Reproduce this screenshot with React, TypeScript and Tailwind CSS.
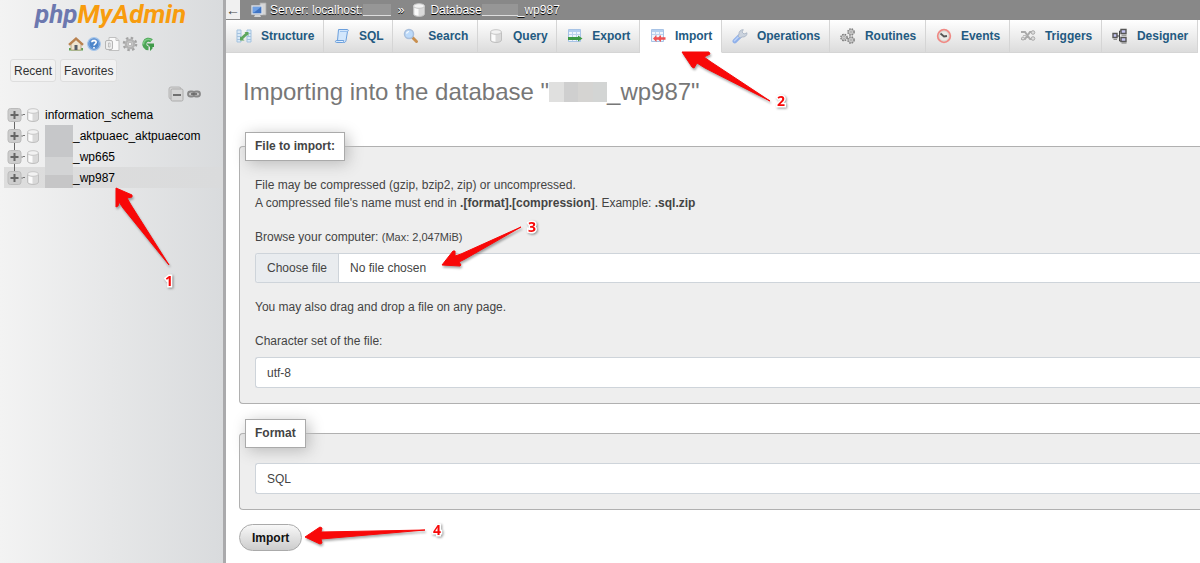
import type { ReactNode } from "react";

const tabs = [
  { label: "Structure", icon: <StructureIcon /> },
  { label: "SQL", icon: <SqlIcon /> },
  { label: "Search", icon: <SearchIcon /> },
  { label: "Query", icon: <DatabaseIcon /> },
  { label: "Export", icon: <TransferIcon color="#3d9a46" /> },
  { label: "Import", icon: <TransferIcon color="#f05050" flip />, active: true },
  { label: "Operations", icon: <WrenchIcon /> },
  { label: "Routines", icon: <RoutinesIcon /> },
  { label: "Events", icon: <ClockIcon /> },
  { label: "Triggers", icon: <TriggersIcon /> },
  { label: "Designer", icon: <DesignerIcon /> },
];

const databases = [
  { name: "information_schema" },
  { name: "_aktpuaec_aktpuaecom", mask: "bg-[#c6c7c9]" },
  { name: "_wp665", mask: "bg-linear-to-b from-[#c6c7c9] from-50% to-[#d3d4d5] to-50%" },
  { name: "_wp987", mask: "bg-linear-to-b from-[#d3d4d5] from-40% to-[#c6c6c7] to-40%", selected: true },
];

function Icon({ children }: { children: ReactNode }) {
  return (
    <svg viewBox="0 0 16 16" className="size-4 shrink-0" fill="none" aria-hidden="true">
      {children}
    </svg>
  );
}

function DatabaseIcon() {
  return (
    <Icon>
      <path d="M2.500 4v8c0 1.400 2.400 2.500 5.500 2.500s5.500-1.100 5.500-2.500V4" fill="#d9d9d9" stroke="#c0c0c0" />
      <path d="M3.500 5.500v7c1 .7 2.500 1.200 4 1.200V6.800z" fill="#fbfbfb" />
      <ellipse cx="8" cy="4" rx="5.500" ry="2.300" fill="#f2f2f2" stroke="#c8c8c8" />
    </Icon>
  );
}

function StructureIcon() {
  return (
    <Icon>
      <path d="M1 2h4v12H1zM11 2h4v12h-4z" fill="#d9e9f7" stroke="#a3c2df" />
      <path d="M1 5.500h4M1 8.500h4M11 5.500h4M11 8.500h4M1 11.500h4M11 11.500h4" stroke="#a3c2df" />
      <path d="M5 11 11 5.500" stroke="#5da65d" strokeWidth="2.800" />
      <path d="M4 8.500v4H8.500M12.500 8V4H8.500z" fill="#5da65d" />
    </Icon>
  );
}

function SqlIcon() {
  return (
    <Icon>
      <path d="M4.500 1.500h9c1 0 1 2 0 2L12 12.500c-.3 1.400-1 2-2 2H2.500c-1.500 0-1.300-2 0-2h1z" fill="#d3e7fc" stroke="#6b9fdc" />
      <path d="M2.500 12.500h7.300c-.6 1 .1 2 .2 2" stroke="#6b9fdc" fill="#eaf4ff" />
      <path d="M13.500 3.500H6" stroke="#9cc2ee" />
    </Icon>
  );
}

function SearchIcon() {
  return (
    <Icon>
      <path d="m9.500 9.500 4 4" stroke="#c98f4e" strokeWidth="3" strokeLinecap="round" />
      <circle cx="6" cy="6" r="4.500" fill="#bcdafa" stroke="#a9bfdc" strokeWidth="1.500" />
      <path d="M3.500 5.500A2.800 2.800 0 0 1 6 3.500" stroke="#fff" strokeWidth="1.200" />
    </Icon>
  );
}

function TransferIcon({ color, flip }: { color: string; flip?: boolean }) {
  return (
    <Icon>
      <path d="M1.500 1.500h12v12h-12z" fill="#eef5fd" stroke="#a7c3e6" />
      <path d="M2 2h11v2H2z" fill="#b4d0f0" />
      <path d="M2 6.500h11M5.500 4v9M9.500 4v9" stroke="#bcd2ec" />
      {flip ? (
        <path d="m3 10.500 3.500-3.500v2.300h2L11 7v2.300h4.500v2.400H11V14l-2.500-2.300h-2V14z" fill={color} />
      ) : (
        <path d="M1 9h10V7.500l4.500 3-4.500 3V12H1z" fill={color} />
      )}
    </Icon>
  );
}

function WrenchIcon() {
  return (
    <Icon>
      <path d="m2.800 13.200 5-5" stroke="#8fb0ea" strokeWidth="4.500" strokeLinecap="round" />
      <path d="m2.500 12.700 4.500-4.500" stroke="#bcd2f8" strokeWidth="1.500" strokeLinecap="round" />
      <path d="M7 6.500c-.5-2.500 1.500-5 4.300-4.800L10 4l2 2 3-1.200c.3 2.700-2.200 4.700-5 4.200L8 10 6 8z" fill="#cbd3de" stroke="#a6b1c2" strokeWidth=".8" />
    </Icon>
  );
}

function Gear({ x, y, r }: { x: number; y: number; r: number }) {
  return (
    <>
      <circle cx={x} cy={y} r={r} stroke="#777" strokeWidth="1.600" strokeDasharray="1.500 .9" />
      <circle cx={x} cy={y} r={r - 0.5} fill="#ddd" stroke="#888" strokeWidth=".6" />
      <circle cx={x} cy={y} r={r / 3} fill="#fff" stroke="#777" strokeWidth=".6" />
    </>
  );
}

function RoutinesIcon() {
  return (
    <Icon>
      <Gear x={11} y={4} r={3} />
      <Gear x={4} y={9.5} r={3} />
      <Gear x={11} y={12} r={3} />
    </Icon>
  );
}

function ClockIcon() {
  return (
    <Icon>
      <circle cx="8" cy="8" r="6.300" fill="#eceae6" stroke="#f08a85" strokeWidth="1.800" />
      <circle cx="8" cy="8" r="5" stroke="#c9c5bf" strokeWidth=".6" />
      <path d="m4.500 5.500 3.500 3 3-.5" stroke="#555" strokeWidth="1.800" />
    </Icon>
  );
}

function TriggersIcon() {
  return (
    <Icon>
      <path d="M1 4h4l5 7h3M1 11h4l5-7h3" stroke="#aaa" strokeWidth="2" />
      <path d="M3 7.500h4" stroke="#bbb" />
      <circle cx="13" cy="4.500" r="1.800" fill="#ddd" stroke="#aaa" />
      <circle cx="13" cy="10.500" r="1.800" fill="#ddd" stroke="#aaa" />
      <circle cx="3" cy="10.500" r="1.500" fill="#ddd" stroke="#aaa" />
    </Icon>
  );
}

function DesignerIcon() {
  return (
    <Icon>
      <path d="M5 8h2.500M9 3H7.500v10H9" stroke="#444" />
      <path d="M1 5.500h4v4H1zM9 1.500h5v4H9zM9 9.500h5v4H9z" fill="#c4c4f2" stroke="#555" strokeWidth="1.400" />
      <path d="M9.500 7.200h5M1.500 11.300h3.500M9.500 15h5" stroke="#777" />
    </Icon>
  );
}

function ServerIcon() {
  return (
    <Icon>
      <path d="M9 1h6v12H9z" fill="#d5d5d5" stroke="#aaa" strokeWidth=".8" />
      <path d="M1 4h10v8H1z" fill="#3f74c4" stroke="#d8dde6" strokeWidth="1.400" />
      <path d="M2 5h8L3 10.500H2z" fill="#6fa0e4" />
      <path d="M4 13h5l1 2H3z" fill="#d5d5d5" />
    </Icon>
  );
}

function HomeIcon() {
  return (
    <Icon>
      <path d="M1 12h14v2.500H1z" fill="#5da052" />
      <path d="M3 7.500 8 3l5 4.500V14H3z" fill="#efe4d0" stroke="#b59a72" strokeWidth=".8" />
      <path d="M1 8.800 8 2.500l7 6.300" stroke="#b98250" strokeWidth="2.400" />
      <path d="M6.500 9h3v5h-3z" fill="#555c68" />
    </Icon>
  );
}

function HelpIcon() {
  return (
    <Icon>
      <circle cx="8" cy="8" r="6.300" fill="#4c85ca" stroke="#a7c6ea" strokeWidth="1.200" />
      <circle cx="8" cy="8" r="4.800" stroke="#7faadf" strokeWidth=".8" />
      <path d="M5.800 6.300C6 4 10.200 4 10.200 6.300 10.200 7.800 8 7.800 8 9.500M8 11v1.500" stroke="#fff" strokeWidth="1.600" />
    </Icon>
  );
}

function DocsIcon() {
  return (
    <Icon>
      <path d="M5 1.500h7l3 3v10H5z" fill="#fafafa" stroke="#c0c0c0" />
      <path d="M12 1.500v3h3" stroke="#c0c0c0" />
      <rect x="1.500" y="4.500" width="7" height="9" rx="1.500" fill="#ededed" stroke="#b5b5b5" />
      <path d="M4.500 7v4H6V7z" fill="#fff" stroke="#aaa" strokeWidth=".7" />
    </Icon>
  );
}

function SettingsIcon() {
  return (
    <Icon>
      <circle cx="8" cy="8" r="6" stroke="#a3a3a3" strokeWidth="2.600" strokeDasharray="2.400 2.310" />
      <circle cx="8" cy="8" r="4" fill="#ddd" stroke="#b3b3b3" strokeWidth="2.600" />
      <circle cx="8" cy="8" r="1.900" fill="#f3f3f3" stroke="#999" strokeWidth=".8" />
    </Icon>
  );
}

function ReloadIcon() {
  return (
    <Icon>
      <path d="M11.500 4.800A4.300 4.300 0 1 0 8.500 12.300" stroke="#4ba455" strokeWidth="4" />
      <path d="M11.500 4.500A4.800 4.800 0 0 0 3.500 8.500" stroke="#7acb82" strokeWidth="1.400" />
      <path d="M6.500 7.500H14V11h-1.500v1.500L10 15V11z" fill="#3f9a49" />
    </Icon>
  );
}

function ExpandIcon() {
  return (
    <Icon>
      <path d="M14 8h2" stroke="#777" />
      <rect x="1" y="1.500" width="13" height="13" rx="2.500" fill="#cdcdcd" stroke="#bbb" />
      <path d="M3.500 8h8M7.500 4v8" stroke="#666" strokeWidth="2" />
    </Icon>
  );
}

function CollapseIcon() {
  return (
    <Icon>
      <rect x="1" y="1" width="12" height="12" rx="2" fill="#d3d3d3" stroke="#b5b5b5" />
      <rect x="3" y="3" width="12" height="12" rx="1.500" fill="#d6d6d6" stroke="#acacac" />
      <path d="M5 9h8" stroke="#666" strokeWidth="1.800" />
    </Icon>
  );
}

function LinkIcon() {
  return (
    <Icon>
      <rect x="2" y="5.500" width="6.500" height="5" rx="2.500" fill="#c5c5c5" stroke="#888" strokeWidth="1.800" />
      <rect x="7.500" y="5.500" width="6.500" height="5" rx="2.500" fill="#c5c5c5" stroke="#888" strokeWidth="1.800" />
      <path d="M5 8h6" stroke="#666" strokeWidth="1.600" />
    </Icon>
  );
}

function Sidebar() {
  return (
    <aside className="w-[226px] shrink-0 border-r-[3px] border-[#aaaaac] bg-linear-to-r from-[#f3f3f3] to-[#d9dbdd] text-black">
      <a href="#home" aria-label="phpMyAdmin" className="block h-8">
        <svg viewBox="0 0 223 32" className="h-8 w-full">
          <text x="35" y="23" className="font-['Roboto',sans-serif] text-[26px] font-bold italic">
            <tspan fill="#6c78af">php</tspan>
            <tspan fill="#f89c0e">MyAdmin</tspan>
          </text>
        </svg>
      </a>

      <nav aria-label="Shortcuts" className="mt-1 flex justify-center gap-[2px]">
        <a href="#home" aria-label="Home"><HomeIcon /></a>
        <a href="#help" aria-label="Help"><HelpIcon /></a>
        <a href="#docs" aria-label="Documentation"><DocsIcon /></a>
        <a href="#settings" aria-label="Settings"><SettingsIcon /></a>
        <a href="#reload" aria-label="Reload"><ReloadIcon /></a>
      </nav>

      <div className="mt-[7px] flex gap-1 pl-[10px]">
        <button className="h-[23px] rounded-[3px] border border-[#dedede] bg-[#f2f2f2] px-[3px] text-[#333]">Recent</button>
        <button className="h-[23px] rounded-[3px] border border-[#dedede] bg-[#f2f2f2] px-[3px] text-[#333]">Favorites</button>
      </div>

      <div className="mt-1 flex justify-end gap-[2px] pr-[21px]">
        <button aria-label="Collapse all"><CollapseIcon /></button>
        <button aria-label="Unlink from main panel"><LinkIcon /></button>
      </div>

      <div className="relative mt-[2px]">
        <div className="absolute top-4 left-[14px] h-[62px] w-px bg-[#666]" />
        <ul>
          {databases.map((db) => (
            <li
              key={db.name}
              className={`ml-1 flex h-[21px] items-center pl-[3px] ${db.selected ? "bg-linear-to-r from-[#dddddd] to-[#dadbdc]" : ""}`}
            >
              <button aria-label={`Expand ${db.name}`} className="relative">
                <ExpandIcon />
              </button>
              <span className="h-px w-[2px] bg-[#777]" />
              <DatabaseIcon />
              <a href={`#${db.name}`} className="ml-1 flex items-center">
                {db.mask && <span className={`h-[21px] w-7 ${db.mask}`} />}
                {db.name}
              </a>
            </li>
          ))}
        </ul>
      </div>
    </aside>
  );
}

function Panel({ title, children }: { title: string; children: ReactNode }) {
  return (
    <fieldset className="rounded-l-[4px] border border-r-0 border-[#b0b0b0] bg-[#eee] pb-[15px] pl-[15px]">
      <legend className="-ml-[10px] border border-[#aaa] bg-white px-[9px] py-[5px] leading-[17px] font-bold shadow-[3px_3px_15px_#bbb]">
        {title}
      </legend>
      {children}
    </fieldset>
  );
}

const field = "w-full rounded-l-[3px] border border-r-0 border-[#ced4da] bg-white";

// Numbered walkthrough arrows drawn over the page
function Callouts() {
  return (
    <svg width="1200" height="563" className="pointer-events-none absolute top-0 left-0" aria-hidden="true">
      <g fill="#f80808" stroke="#f80808" strokeLinejoin="round" className="drop-shadow-[1px_2px_1px_#00000055]">
        <path d="M116 188 132 195v2l-5 1 4 7 38 60-46-57-4-6-1 4-2 1z" />
        <path d="m682 52 27 0 1 2-6 3 7 5 59 39-65-33-8-5-3 5-2-1z" />
        <path d="m442 265 11-14 2 0 0 5 6-2 60-27-56 32-6 3 2 3-1 1z" />
        <path d="m305 537 15-10 2 1-1 4 104-2-104 9 1 4-2 1z" />
      </g>
      <g
        fill="#f80808"
        stroke="#fff"
        strokeWidth="3"
        paintOrder="stroke"
        className="font-['Open_Sans',sans-serif] text-[14px] font-bold drop-shadow-[1px_1px_1px_#00000066]"
      >
        <text x="165" y="286">1</text>
        <text x="777" y="106">2</text>
        <text x="528" y="232">3</text>
        <text x="433" y="535">4</text>
      </g>
    </svg>
  );
}

export default function App() {
  return (
    <div className="relative flex min-h-screen overflow-hidden bg-white font-['Liberation_Sans',Arial,sans-serif] text-[12px] leading-[18px] text-[#444]">
      <Sidebar />

      <div className="min-w-0 flex-1">
        <header className="flex h-5 items-center bg-[#888] text-white [text-shadow:0_1px_0_#000]">
          <button
            aria-label="Hide panel"
            className="h-[19px] w-[14px] self-start bg-[#f0f0f0] text-[14px] text-[#444] [text-shadow:none]"
          >
            ←
          </button>
          <a href="#server" className="ml-[11px] flex items-center gap-[3px]">
            <ServerIcon />
            <span className="flex items-center">
              Server: localhost:
              <span className="h-3 w-7 border-b border-[#ddd] bg-[#969696]" />
            </span>
          </a>
          <span className="mx-[7px]">»</span>
          <a href="#database" className="flex items-center gap-[3px]">
            <DatabaseIcon />
            <span className="flex items-center">
              Database
              <span className="h-3 w-9 border-b border-[#ddd] bg-[#969696]" />
              _wp987
            </span>
          </a>
        </header>

        <nav className="flex h-[33px] overflow-hidden pr-[2px]">
          {tabs.map((tab) => (
            <a
              key={tab.label}
              href={`#${tab.label.toLowerCase()}`}
              className={`flex shrink-0 grow items-center gap-[9px] border-r border-b border-r-[#d5d5d5] px-2 pl-[10px] font-bold text-[#235a81] ${
                tab.active ? "border-b-white bg-white" : "border-b-[#d5d5d5] bg-linear-to-b from-white to-[#dcdcdc]"
              }`}
            >
              {tab.icon}
              {tab.label}
            </a>
          ))}
        </nav>

        <main className="pl-[13px]">
          <h2 className="mt-6 ml-1 flex items-center text-[24px] leading-[30px] text-[#777]">
            Importing into the database "
            <span className="flex h-5 w-[58px]">
              <span className="flex-1 bg-[#e0e0df]" />
              <span className="flex-1 bg-[#cfcfcf]" />
              <span className="flex-1 bg-[#d5d4d2]" />
              <span className="flex-1 bg-[#d3d5d4]" />
            </span>
            _wp987"
          </h2>

          <form className="mt-[25px]" onSubmit={(e) => e.preventDefault()}>
            <Panel title="File to import:">
              <p className="mt-[15px]">
                File may be compressed (gzip, bzip2, zip) or uncompressed.
                <br />
                A compressed file's name must end in <b>.[format].[compression]</b>. Example: <b>.sql.zip</b>
              </p>
              <label htmlFor="import-file" className="mt-4 block">
                Browse your computer: <small className="text-[11px]">(Max: 2,047MiB)</small>
              </label>
              <label className={`${field} mt-[7px] flex h-[30px] overflow-hidden`}>
                <input id="import-file" type="file" className="sr-only" />
                <span className="flex items-center border-r border-[#ced4da] bg-[#e9ecef] px-[11px]">Choose file</span>
                <span className="flex items-center px-[11px]">No file chosen</span>
              </label>
              <p className="mt-[15px]">You may also drag and drop a file on any page.</p>
              <label htmlFor="charset" className="mt-4 block">Character set of the file:</label>
              <select id="charset" className={`${field} mt-[7px] block h-[31px] appearance-none px-[11px]`}>
                <option>utf-8</option>
              </select>
            </Panel>

            <div className="mt-[15px]">
              <Panel title="Format">
                <select aria-label="Format" className={`${field} mt-[15px] block h-[31px] appearance-none px-[11px]`}>
                  <option>SQL</option>
                </select>
              </Panel>
            </div>

            <button className="mt-[14px] mb-3 h-[27px] rounded-full border border-[#aaa] bg-linear-to-b from-[#f8f8f8] to-[#ccc] px-3 font-bold text-[#111]">
              Import
            </button>
          </form>
        </main>
      </div>

      <Callouts />
    </div>
  );
}
